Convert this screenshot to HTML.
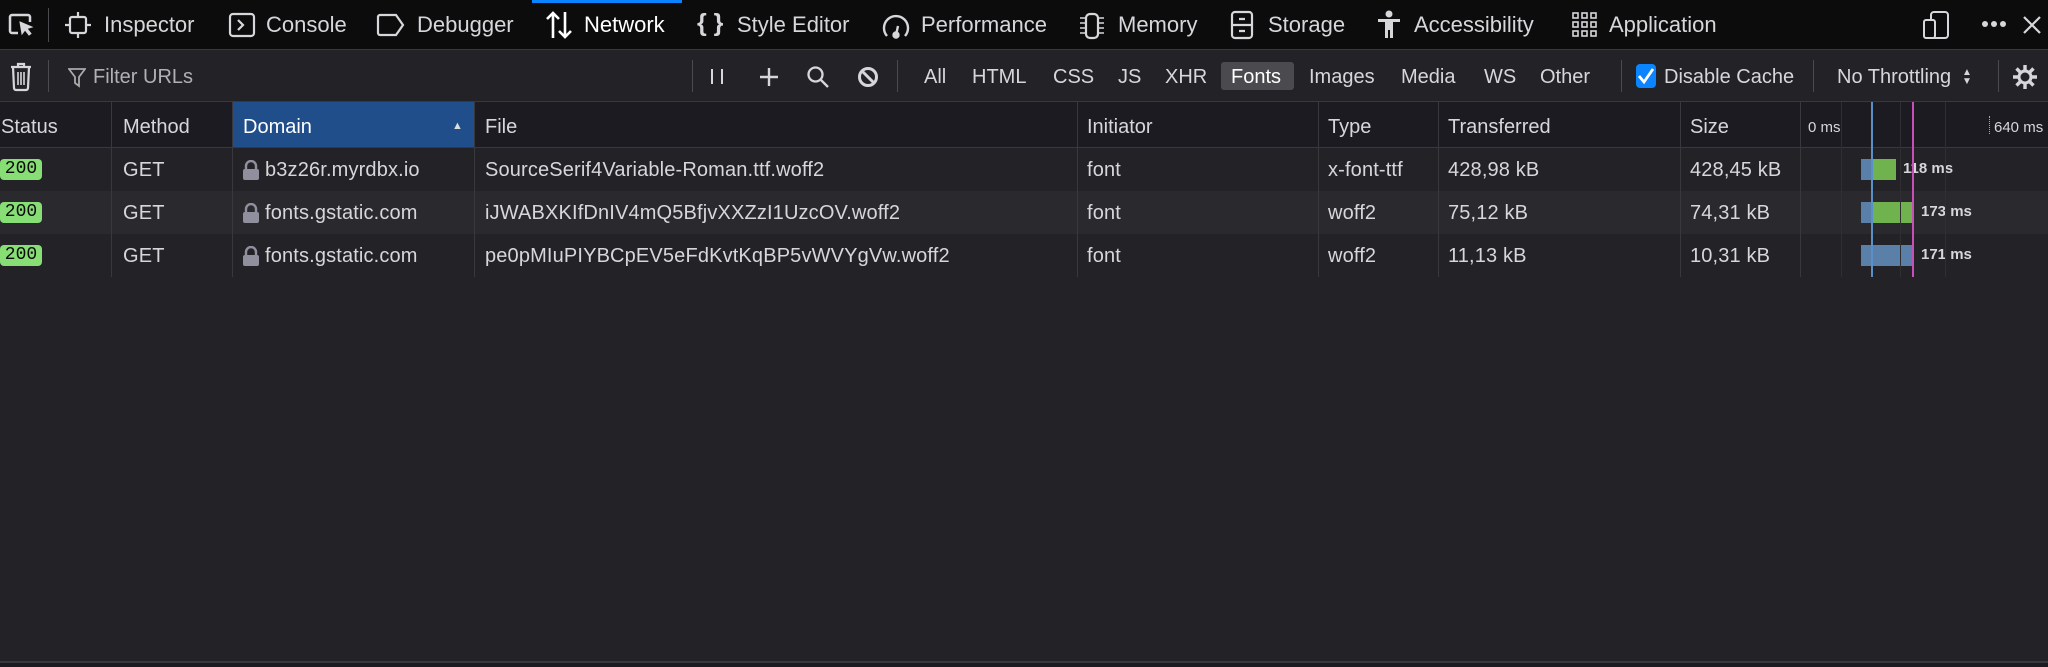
<!DOCTYPE html>
<html><head><meta charset="utf-8"><style>
*{margin:0;padding:0;box-sizing:border-box}
body{width:2048px;height:667px;background:#232327;font-family:"Liberation Sans",sans-serif;color:#d7d7db;position:relative;overflow:hidden}
.a{position:absolute;white-space:nowrap}
.tabs{position:absolute;left:0;top:0;width:2048px;height:50px;background:#0c0c0d;border-bottom:1px solid #38383d}
.t{position:absolute;top:12px;font-size:22px;color:#d7d7db;white-space:nowrap}
.tb{position:absolute;left:0;top:51px;width:2048px;height:51px;background:#232327;border-bottom:1px solid #38383d}
.f{position:absolute;top:15px;font-size:20px;color:#d7d7db;white-space:nowrap}
.sep{position:absolute;top:9px;width:1px;height:32px;background:#4a4a4f}
.hd{position:absolute;left:0;top:102px;width:2048px;height:46px;background:#1c1b22;border-bottom:1px solid #38383d}
.h{position:absolute;top:14px;font-size:20px;color:#d7d7db;white-space:nowrap}
.vl{position:absolute;width:1px;background:#38383d}
.row{position:absolute;left:0;width:2048px;height:43px}
.c{position:absolute;top:11px;font-size:20px;letter-spacing:0.15px;color:#d7d7db;white-space:nowrap}
.badge{position:absolute;left:0;top:11px;width:42px;height:21px;background:#86de74;color:#0c0c0d;border-radius:4px;font-family:"Liberation Mono",monospace;font-size:18px;line-height:21px;text-align:center}
.lock{position:absolute;left:243px;top:12px}
.bar{position:absolute;top:11px;height:21px}
.ms{position:absolute;top:12px;font-size:15px;font-weight:bold;color:#d7d7db}
svg{position:absolute}
</style></head><body>
<div class="tabs">
<div class="a" style="left:532px;top:0;width:150px;height:3px;background:#0a84ff"></div>
<svg style="left:7px;top:11px" width="28" height="28" viewBox="0 0 28 28" fill="none" stroke="#d7d7db" stroke-width="2.5"><path d="M11 22H5a2 2 0 0 1-2-2V6a2 2 0 0 1 2-2h16a2 2 0 0 1 2 2v5"/><path d="M13 11l12 5-5 1.5 4 5-2 1.5-4-5-3 4z" fill="#d7d7db" stroke-width="1"/></svg>
<div class="a" style="left:48px;top:8px;width:1px;height:34px;background:#4a4a4f"></div>
<svg style="left:64px;top:11px" width="28" height="28" viewBox="0 0 28 28" fill="none" stroke="#d7d7db" stroke-width="2.2"><rect x="6" y="6" width="16" height="16" rx="2"/><path d="M14 1v5M14 22v5M1 14h5M22 14h5"/></svg>
<div class="t" style="left:104px">Inspector</div>
<svg style="left:228px;top:12px" width="28" height="26" viewBox="0 0 28 26" fill="none" stroke="#d7d7db" stroke-width="2.2"><rect x="2" y="2" width="24" height="22" rx="3"/><path d="M10 8l5 5-5 5"/></svg>
<div class="t" style="left:266px">Console</div>
<svg style="left:376px;top:13px" width="30" height="24" viewBox="0 0 30 24" fill="none" stroke="#d7d7db" stroke-width="2.2"><path d="M4 2h16l7 10-7 10H4a2 2 0 0 1-2-2V4a2 2 0 0 1 2-2z"/></svg>
<div class="t" style="left:417px">Debugger</div>
<svg style="left:544px;top:10px" width="30" height="30" viewBox="0 0 30 30" fill="none" stroke="#fff" stroke-width="2.6"><path d="M9 28V3M3 9l6-6 6 6M21 2v25M15 21l6 6 6-6"/></svg>
<div class="t" style="left:584px;color:#fff">Network</div>
<div class="t" style="left:697px;top:9px;font-size:25px;font-weight:bold">{ }</div>
<div class="t" style="left:737px">Style Editor</div>
<svg style="left:881px;top:11px" width="30" height="30" viewBox="0 0 30 30" fill="none" stroke="#d7d7db" stroke-width="2.4"><path d="M6 25A12 12 0 1 1 24 25"/><path d="M15 24l2-9"/><circle cx="15" cy="24" r="2.5" fill="#d7d7db"/></svg>
<div class="t" style="left:921px">Performance</div>
<svg style="left:1077px;top:11px" width="30" height="30" viewBox="0 0 30 30" fill="none" stroke="#d7d7db" stroke-width="2.2"><rect x="9" y="3" width="12" height="24" rx="4"/><path d="M3 7h5M3 12h5M3 17h5M3 22h5M22 7h5M22 12h5M22 17h5M22 22h5" stroke-width="1.6"/></svg>
<div class="t" style="left:1118px">Memory</div>
<svg style="left:1230px;top:10px" width="24" height="30" viewBox="0 0 24 30" fill="none" stroke="#d7d7db" stroke-width="2.2"><rect x="2" y="2" width="20" height="26" rx="3"/><path d="M2 15h20M9 9h6M9 21h6"/></svg>
<div class="t" style="left:1268px">Storage</div>
<svg style="left:1376px;top:10px" width="26" height="30" viewBox="0 0 26 30"><circle cx="13" cy="4" r="3.5" fill="#d7d7db"/><path d="M2 9h22v3h-7v16h-3v-8h-2v8H9V12H2z" fill="#d7d7db"/></svg>
<div class="t" style="left:1414px">Accessibility</div>
<svg style="left:1572px;top:12px" width="26" height="26" viewBox="0 0 26 26" fill="none" stroke="#d7d7db" stroke-width="1.6"><rect x="1" y="1" width="5" height="5"/><rect x="10" y="1" width="5" height="5"/><rect x="19" y="1" width="5" height="5"/><rect x="1" y="10" width="5" height="5"/><rect x="10" y="10" width="5" height="5"/><rect x="19" y="10" width="5" height="5"/><rect x="1" y="19" width="5" height="5"/><rect x="10" y="19" width="5" height="5"/><rect x="19" y="19" width="5" height="5"/></svg>
<div class="t" style="left:1609px">Application</div>
<svg style="left:1922px;top:10px" width="28" height="30" viewBox="0 0 28 30" fill="none" stroke="#d7d7db" stroke-width="2"><rect x="9" y="2" width="17" height="26" rx="3"/><rect x="2" y="10" width="11" height="18" rx="2" fill="#0c0c0d"/></svg>
<div class="a" style="left:1982px;top:21px;line-height:0"><span style="display:inline-block;width:6px;height:6px;border-radius:3px;background:#d7d7db;margin-right:3px"></span><span style="display:inline-block;width:6px;height:6px;border-radius:3px;background:#d7d7db;margin-right:3px"></span><span style="display:inline-block;width:6px;height:6px;border-radius:3px;background:#d7d7db"></span></div>
<svg style="left:2022px;top:15px" width="20" height="20" viewBox="0 0 20 20" stroke="#d7d7db" stroke-width="2.2"><path d="M2 2l16 16M18 2L2 18"/></svg>
</div>
<div class="tb">
<svg style="left:10px;top:11px" width="22" height="30" viewBox="0 0 22 30" fill="none" stroke="#d7d7db" stroke-width="2.2"><path d="M1 5h20M8 5V2h6v3M3 5l1 21a2 2 0 0 0 2 2h10a2 2 0 0 0 2-2l1-21"/><path d="M8 10v13M11 10v13M14 10v13" stroke-width="1.6"/></svg>
<div class="sep" style="left:48px"></div>
<svg style="left:68px;top:17px" width="18" height="20" viewBox="0 0 18 20" fill="none" stroke="#aaa" stroke-width="1.8"><path d="M1 1h16l-6 8v9l-4-3V9z"/></svg>
<div class="f" style="left:93px;color:#b1b1b3">Filter URLs</div>
<div class="sep" style="left:692px"></div>
<div class="a" style="left:711px;top:18px;width:2px;height:15px;background:#d7d7db"></div>
<div class="a" style="left:721px;top:18px;width:2px;height:15px;background:#d7d7db"></div>
<div class="sep" style="left:897px"></div>
<svg style="left:759px;top:16px" width="20" height="20" viewBox="0 0 20 20" stroke="#d7d7db" stroke-width="2.4"><path d="M10 1v18M1 10h18"/></svg>
<svg style="left:806px;top:14px" width="24" height="24" viewBox="0 0 24 24" fill="none" stroke="#d7d7db" stroke-width="2.3"><circle cx="9.5" cy="9.5" r="7"/><path d="M15 15l7 7"/></svg>
<svg style="left:857px;top:15px" width="22" height="22" viewBox="0 0 22 22" fill="none" stroke="#d7d7db" stroke-width="3"><circle cx="11" cy="11" r="8.5"/><path d="M5 5l12 12"/></svg>
<div class="f" style="left:924px">All</div>
<div class="f" style="left:972px">HTML</div>
<div class="f" style="left:1053px">CSS</div>
<div class="f" style="left:1118px">JS</div>
<div class="f" style="left:1165px">XHR</div>
<div class="a" style="left:1221px;top:11px;width:73px;height:28px;background:#4a4a4f;border-radius:3px"></div>
<div class="f" style="left:1231px;color:#fff">Fonts</div>
<div class="f" style="left:1309px">Images</div>
<div class="f" style="left:1401px">Media</div>
<div class="f" style="left:1484px">WS</div>
<div class="f" style="left:1540px">Other</div>
<div class="sep" style="left:1621px"></div>
<div class="a" style="left:1636px;top:13px;width:20px;height:24px;background:#0a84ff;border-radius:4px"></div>
<svg style="left:1636px;top:15px" width="20" height="20" viewBox="0 0 20 20" fill="none" stroke="#fff" stroke-width="2.8"><path d="M3 10l5 6 9-13"/></svg>
<div class="f" style="left:1664px">Disable Cache</div>
<div class="sep" style="left:1813px"></div>
<div class="f" style="left:1837px">No Throttling</div>
<div class="a" style="left:1962px;top:17px;font-size:10px;line-height:9px;color:#d7d7db">▲<br>▼</div>
<div class="sep" style="left:1998px"></div>
<svg style="left:2012px;top:13px" width="26" height="26" viewBox="0 0 26 26" fill="none" stroke="#d7d7db"><circle cx="13" cy="13" r="6" stroke-width="3"/><path d="M13 1v6M13 19v6M1 13h6M19 13h6M4.5 4.5l4 4M17.5 17.5l4 4M4.5 21.5l4-4M17.5 8.5l4-4" stroke-width="3.4"/></svg>
</div>
<div class="hd">
<div class="h" style="left:1px">Status</div>
<div class="h" style="left:123px">Method</div>
<div class="a" style="left:233px;top:0;width:241px;height:45px;background:#204e8a"></div>
<div class="h" style="left:243px;color:#fff">Domain</div>
<div class="a" style="left:452px;top:18px;font-size:11px;color:#ddd">▲</div>
<div class="h" style="left:485px">File</div>
<div class="h" style="left:1087px">Initiator</div>
<div class="h" style="left:1328px">Type</div>
<div class="h" style="left:1448px">Transferred</div>
<div class="h" style="left:1690px">Size</div>
<div class="h" style="left:1808px;font-size:15px;top:17px">0 ms</div>
<div class="a" style="left:1989px;top:14px;width:1px;height:18px;border-left:1px dotted #aaa"></div>
<div class="h" style="left:1994px;font-size:15px;top:17px">640 ms</div>
</div>
<div class="row" style="top:148px;background:#232327">
<div class="badge">200</div><div class="c" style="left:123px">GET</div>
<svg class="lock" width="16" height="20" viewBox="0 0 16 20"><path d="M3 9V6a5 5 0 0 1 10 0v3" fill="none" stroke="#8f8f9d" stroke-width="2.4"/><rect x="0" y="9" width="16" height="11" rx="2" fill="#8f8f9d"/></svg>
<div class="c" style="left:265px">b3z26r.myrdbx.io</div>
<div class="c" style="left:485px">SourceSerif4Variable-Roman.ttf.woff2</div>
<div class="c" style="left:1087px">font</div><div class="c" style="left:1328px">x-font-ttf</div>
<div class="c" style="left:1448px">428,98 kB</div><div class="c" style="left:1690px">428,45 kB</div>
<div class="bar" style="left:1861px;width:10px;background:#5a7fa8"></div><div class="bar" style="left:1871px;width:25px;background:#70b24e"></div>
<div class="ms" style="left:1903px">118 ms</div>
</div>
<div class="row" style="top:191px;background:#2a2a2e">
<div class="badge">200</div><div class="c" style="left:123px">GET</div>
<svg class="lock" width="16" height="20" viewBox="0 0 16 20"><path d="M3 9V6a5 5 0 0 1 10 0v3" fill="none" stroke="#8f8f9d" stroke-width="2.4"/><rect x="0" y="9" width="16" height="11" rx="2" fill="#8f8f9d"/></svg>
<div class="c" style="left:265px">fonts.gstatic.com</div>
<div class="c" style="left:485px">iJWABXKIfDnIV4mQ5BfjvXXZzI1UzcOV.woff2</div>
<div class="c" style="left:1087px">font</div><div class="c" style="left:1328px">woff2</div>
<div class="c" style="left:1448px">75,12 kB</div><div class="c" style="left:1690px">74,31 kB</div>
<div class="bar" style="left:1861px;width:10px;background:#5a7fa8"></div><div class="bar" style="left:1871px;width:42px;background:#70b24e"></div>
<div class="ms" style="left:1921px">173 ms</div>
</div>
<div class="row" style="top:234px;background:#232327">
<div class="badge">200</div><div class="c" style="left:123px">GET</div>
<svg class="lock" width="16" height="20" viewBox="0 0 16 20"><path d="M3 9V6a5 5 0 0 1 10 0v3" fill="none" stroke="#8f8f9d" stroke-width="2.4"/><rect x="0" y="9" width="16" height="11" rx="2" fill="#8f8f9d"/></svg>
<div class="c" style="left:265px">fonts.gstatic.com</div>
<div class="c" style="left:485px">pe0pMIuPIYBCpEV5eFdKvtKqBP5vWVYgVw.woff2</div>
<div class="c" style="left:1087px">font</div><div class="c" style="left:1328px">woff2</div>
<div class="c" style="left:1448px">11,13 kB</div><div class="c" style="left:1690px">10,31 kB</div>
<div class="bar" style="left:1861px;width:52px;background:#5a7fa8"></div>
<div class="ms" style="left:1921px">171 ms</div>
</div>
<div class="vl" style="left:111px;top:102px;height:175px"></div>
<div class="vl" style="left:232px;top:102px;height:175px"></div>
<div class="vl" style="left:474px;top:102px;height:175px"></div>
<div class="vl" style="left:1077px;top:102px;height:175px"></div>
<div class="vl" style="left:1318px;top:102px;height:175px"></div>
<div class="vl" style="left:1438px;top:102px;height:175px"></div>
<div class="vl" style="left:1680px;top:102px;height:175px"></div>
<div class="vl" style="left:1800px;top:102px;height:175px"></div>
<div class="vl" style="left:1841px;top:102px;height:175px;background:#2e2e33"></div>
<div class="vl" style="left:1900px;top:102px;height:175px;background:#2e2e33"></div>
<div class="vl" style="left:1945px;top:102px;height:175px;background:#2e2e33"></div>
<div class="vl" style="left:1871px;top:102px;height:175px;background:#5b8fc7;width:2px"></div>
<div class="vl" style="left:1912px;top:102px;height:175px;background:#c94fb8;width:2px"></div>
<div class="a" style="left:0;top:661px;width:2048px;height:2px;background:#38383d"></div>
<div class="a" style="left:0;top:663px;width:2048px;height:4px;background:#1c1b22"></div>
</body></html>
